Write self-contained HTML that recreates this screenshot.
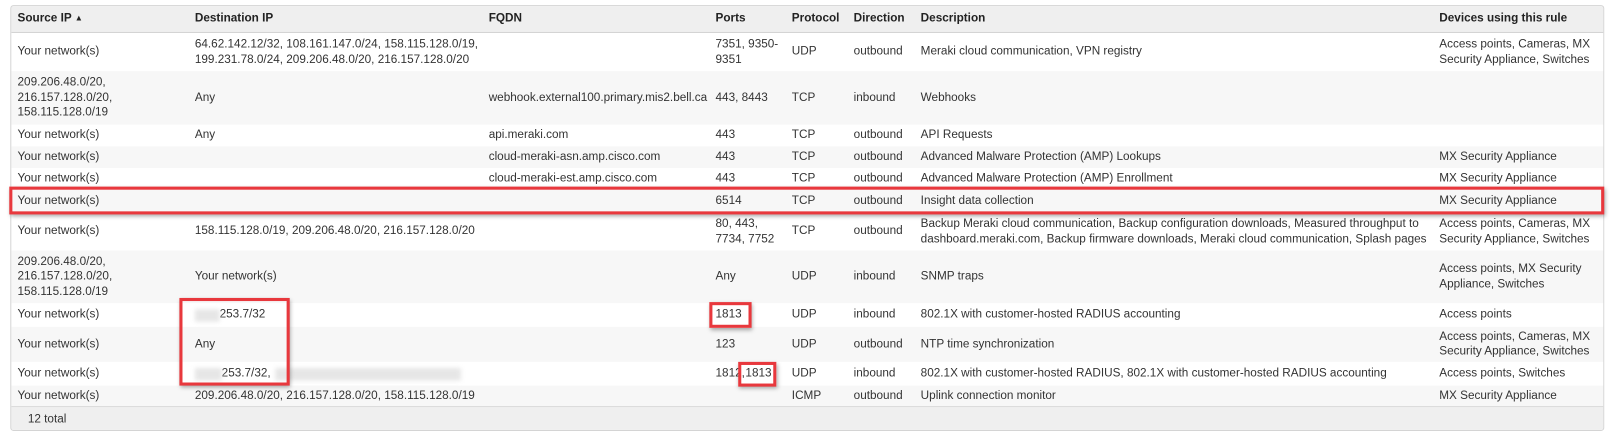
<!DOCTYPE html>
<html><head><meta charset="utf-8"><style>
*{margin:0;padding:0;box-sizing:border-box}
body{width:1617px;height:432px;background:#fff;position:relative;overflow:hidden;font-family:"Liberation Sans",sans-serif;font-size:11.4px;color:#333}
#wrap{position:absolute;left:0;top:0;width:1570px;height:420px;transform:scale(1.031);transform-origin:0 0}
.tbl{position:absolute;left:10px;top:5px;width:1546px;height:413px;border:1px solid #d4d4d4;border-radius:3px;overflow:hidden}
.r{position:absolute;left:0;width:1546px}
.c{position:absolute;top:0;height:100%;display:flex;align-items:center;line-height:14.5px;white-space:nowrap}
.h{background:#efefef;border-bottom:1px solid #d4d4d4;font-weight:bold;color:#222}
.g{background:#f7f7f7}
.w{background:#fff}
.box{position:absolute;border:3px solid #e8383d;box-shadow:1px 2px 4px rgba(0,0,0,.35)}
.blur{display:inline-block;background:#e6e6e6;filter:blur(2px);height:12px;vertical-align:middle}
</style></head><body><div id="wrap">
<div class="tbl">
<div class="r h" style="top:0;height:26px">
<div class="c" style="left:6px">Source IP <span style="font-size:8px;margin-left:3px">▲</span></div>
<div class="c" style="left:178px">Destination IP</div>
<div class="c" style="left:463px">FQDN</div>
<div class="c" style="left:683px">Ports</div>
<div class="c" style="left:757px">Protocol</div>
<div class="c" style="left:817px">Direction</div>
<div class="c" style="left:882px">Description</div>
<div class="c" style="left:1385px">Devices using this rule</div>
</div>
<div class="r w" style="top:26px;height:37px">
<div class="c" style="left:6px">Your network(s)</div>
<div class="c" style="left:178px">64.62.142.12/32, 108.161.147.0/24, 158.115.128.0/19,<br>199.231.78.0/24, 209.206.48.0/20, 216.157.128.0/20</div>
<div class="c" style="left:683px">7351, 9350-<br>9351</div>
<div class="c" style="left:757px">UDP</div><div class="c" style="left:817px">outbound</div>
<div class="c" style="left:882px">Meraki cloud communication, VPN registry</div>
<div class="c" style="left:1385px">Access points, Cameras, MX<br>Security Appliance, Switches</div>
</div>
<div class="r g" style="top:63px;height:52px">
<div class="c" style="left:6px">209.206.48.0/20,<br>216.157.128.0/20,<br>158.115.128.0/19</div>
<div class="c" style="left:178px">Any</div>
<div class="c" style="left:463px">webhook.external100.primary.mis2.bell.ca</div>
<div class="c" style="left:683px">443, 8443</div>
<div class="c" style="left:757px">TCP</div><div class="c" style="left:817px">inbound</div>
<div class="c" style="left:882px">Webhooks</div>
</div>
<div class="r w" style="top:115px;height:21px">
<div class="c" style="left:6px">Your network(s)</div>
<div class="c" style="left:178px">Any</div>
<div class="c" style="left:463px">api.meraki.com</div>
<div class="c" style="left:683px">443</div>
<div class="c" style="left:757px">TCP</div><div class="c" style="left:817px">outbound</div>
<div class="c" style="left:882px">API Requests</div>
</div>
<div class="r g" style="top:136px;height:21px">
<div class="c" style="left:6px">Your network(s)</div>
<div class="c" style="left:463px">cloud-meraki-asn.amp.cisco.com</div>
<div class="c" style="left:683px">443</div>
<div class="c" style="left:757px">TCP</div><div class="c" style="left:817px">outbound</div>
<div class="c" style="left:882px">Advanced Malware Protection (AMP) Lookups</div>
<div class="c" style="left:1385px">MX Security Appliance</div>
</div>
<div class="r w" style="top:157px;height:21px">
<div class="c" style="left:6px">Your network(s)</div>
<div class="c" style="left:463px">cloud-meraki-est.amp.cisco.com</div>
<div class="c" style="left:683px">443</div>
<div class="c" style="left:757px">TCP</div><div class="c" style="left:817px">outbound</div>
<div class="c" style="left:882px">Advanced Malware Protection (AMP) Enrollment</div>
<div class="c" style="left:1385px">MX Security Appliance</div>
</div>
<div class="r g" style="top:178px;height:22px">
<div class="c" style="left:6px">Your network(s)</div>
<div class="c" style="left:683px">6514</div>
<div class="c" style="left:757px">TCP</div><div class="c" style="left:817px">outbound</div>
<div class="c" style="left:882px">Insight data collection</div>
<div class="c" style="left:1385px">MX Security Appliance</div>
</div>
<div class="r w" style="top:200px;height:37px">
<div class="c" style="left:6px">Your network(s)</div>
<div class="c" style="left:178px">158.115.128.0/19, 209.206.48.0/20, 216.157.128.0/20</div>
<div class="c" style="left:683px">80, 443,<br>7734, 7752</div>
<div class="c" style="left:757px">TCP</div><div class="c" style="left:817px">outbound</div>
<div class="c" style="left:882px">Backup Meraki cloud communication, Backup configuration downloads, Measured throughput to<br>dashboard.meraki.com, Backup firmware downloads, Meraki cloud communication, Splash pages</div>
<div class="c" style="left:1385px">Access points, Cameras, MX<br>Security Appliance, Switches</div>
</div>
<div class="r g" style="top:237px;height:51px">
<div class="c" style="left:6px">209.206.48.0/20,<br>216.157.128.0/20,<br>158.115.128.0/19</div>
<div class="c" style="left:178px">Your network(s)</div>
<div class="c" style="left:683px">Any</div>
<div class="c" style="left:757px">UDP</div><div class="c" style="left:817px">inbound</div>
<div class="c" style="left:882px">SNMP traps</div>
<div class="c" style="left:1385px">Access points, MX Security<br>Appliance, Switches</div>
</div>
<div class="r w" style="top:288px;height:23px">
<div class="c" style="left:6px">Your network(s)</div>
<div class="c" style="left:178px"><span class="blur" style="width:24px"></span>253.7/32</div>
<div class="c" style="left:683px">1813</div>
<div class="c" style="left:757px">UDP</div><div class="c" style="left:817px">inbound</div>
<div class="c" style="left:882px">802.1X with customer-hosted RADIUS accounting</div>
<div class="c" style="left:1385px">Access points</div>
</div>
<div class="r g" style="top:311px;height:34px">
<div class="c" style="left:6px">Your network(s)</div>
<div class="c" style="left:178px">Any</div>
<div class="c" style="left:683px">123</div>
<div class="c" style="left:757px">UDP</div><div class="c" style="left:817px">outbound</div>
<div class="c" style="left:882px">NTP time synchronization</div>
<div class="c" style="left:1385px">Access points, Cameras, MX<br>Security Appliance, Switches</div>
</div>
<div class="r w" style="top:345px;height:23px">
<div class="c" style="left:6px">Your network(s)</div>
<div class="c" style="left:178px"><span class="blur" style="width:26px"></span>253.7/32,<span class="blur" style="width:180px;margin-left:4px"></span></div>
<div class="c" style="left:683px">1812,</div>
<div class="c" style="left:712px">1813</div>
<div class="c" style="left:757px">UDP</div><div class="c" style="left:817px">inbound</div>
<div class="c" style="left:882px">802.1X with customer-hosted RADIUS, 802.1X with customer-hosted RADIUS accounting</div>
<div class="c" style="left:1385px">Access points, Switches</div>
</div>
<div class="r g" style="top:368px;height:21px;border-bottom:1px solid #d4d4d4">
<div class="c" style="left:6px">Your network(s)</div>
<div class="c" style="left:178px">209.206.48.0/20, 216.157.128.0/20, 158.115.128.0/19</div>
<div class="c" style="left:757px">ICMP</div><div class="c" style="left:817px">outbound</div>
<div class="c" style="left:882px">Uplink connection monitor</div>
<div class="c" style="left:1385px">MX Security Appliance</div>
</div>
<div class="r" style="top:389px;height:24px;background:#efefef">
<div class="c" style="left:16px">12 total</div>
</div>
</div>
<div class="box" style="left:9px;top:181px;width:1547px;height:27px"></div>
<div class="box" style="left:174px;top:289px;width:107px;height:85px"></div>
<div class="box" style="left:688px;top:293px;width:41px;height:25px"></div>
<div class="box" style="left:716px;top:351px;width:37px;height:24px"></div>
</div></body></html>
